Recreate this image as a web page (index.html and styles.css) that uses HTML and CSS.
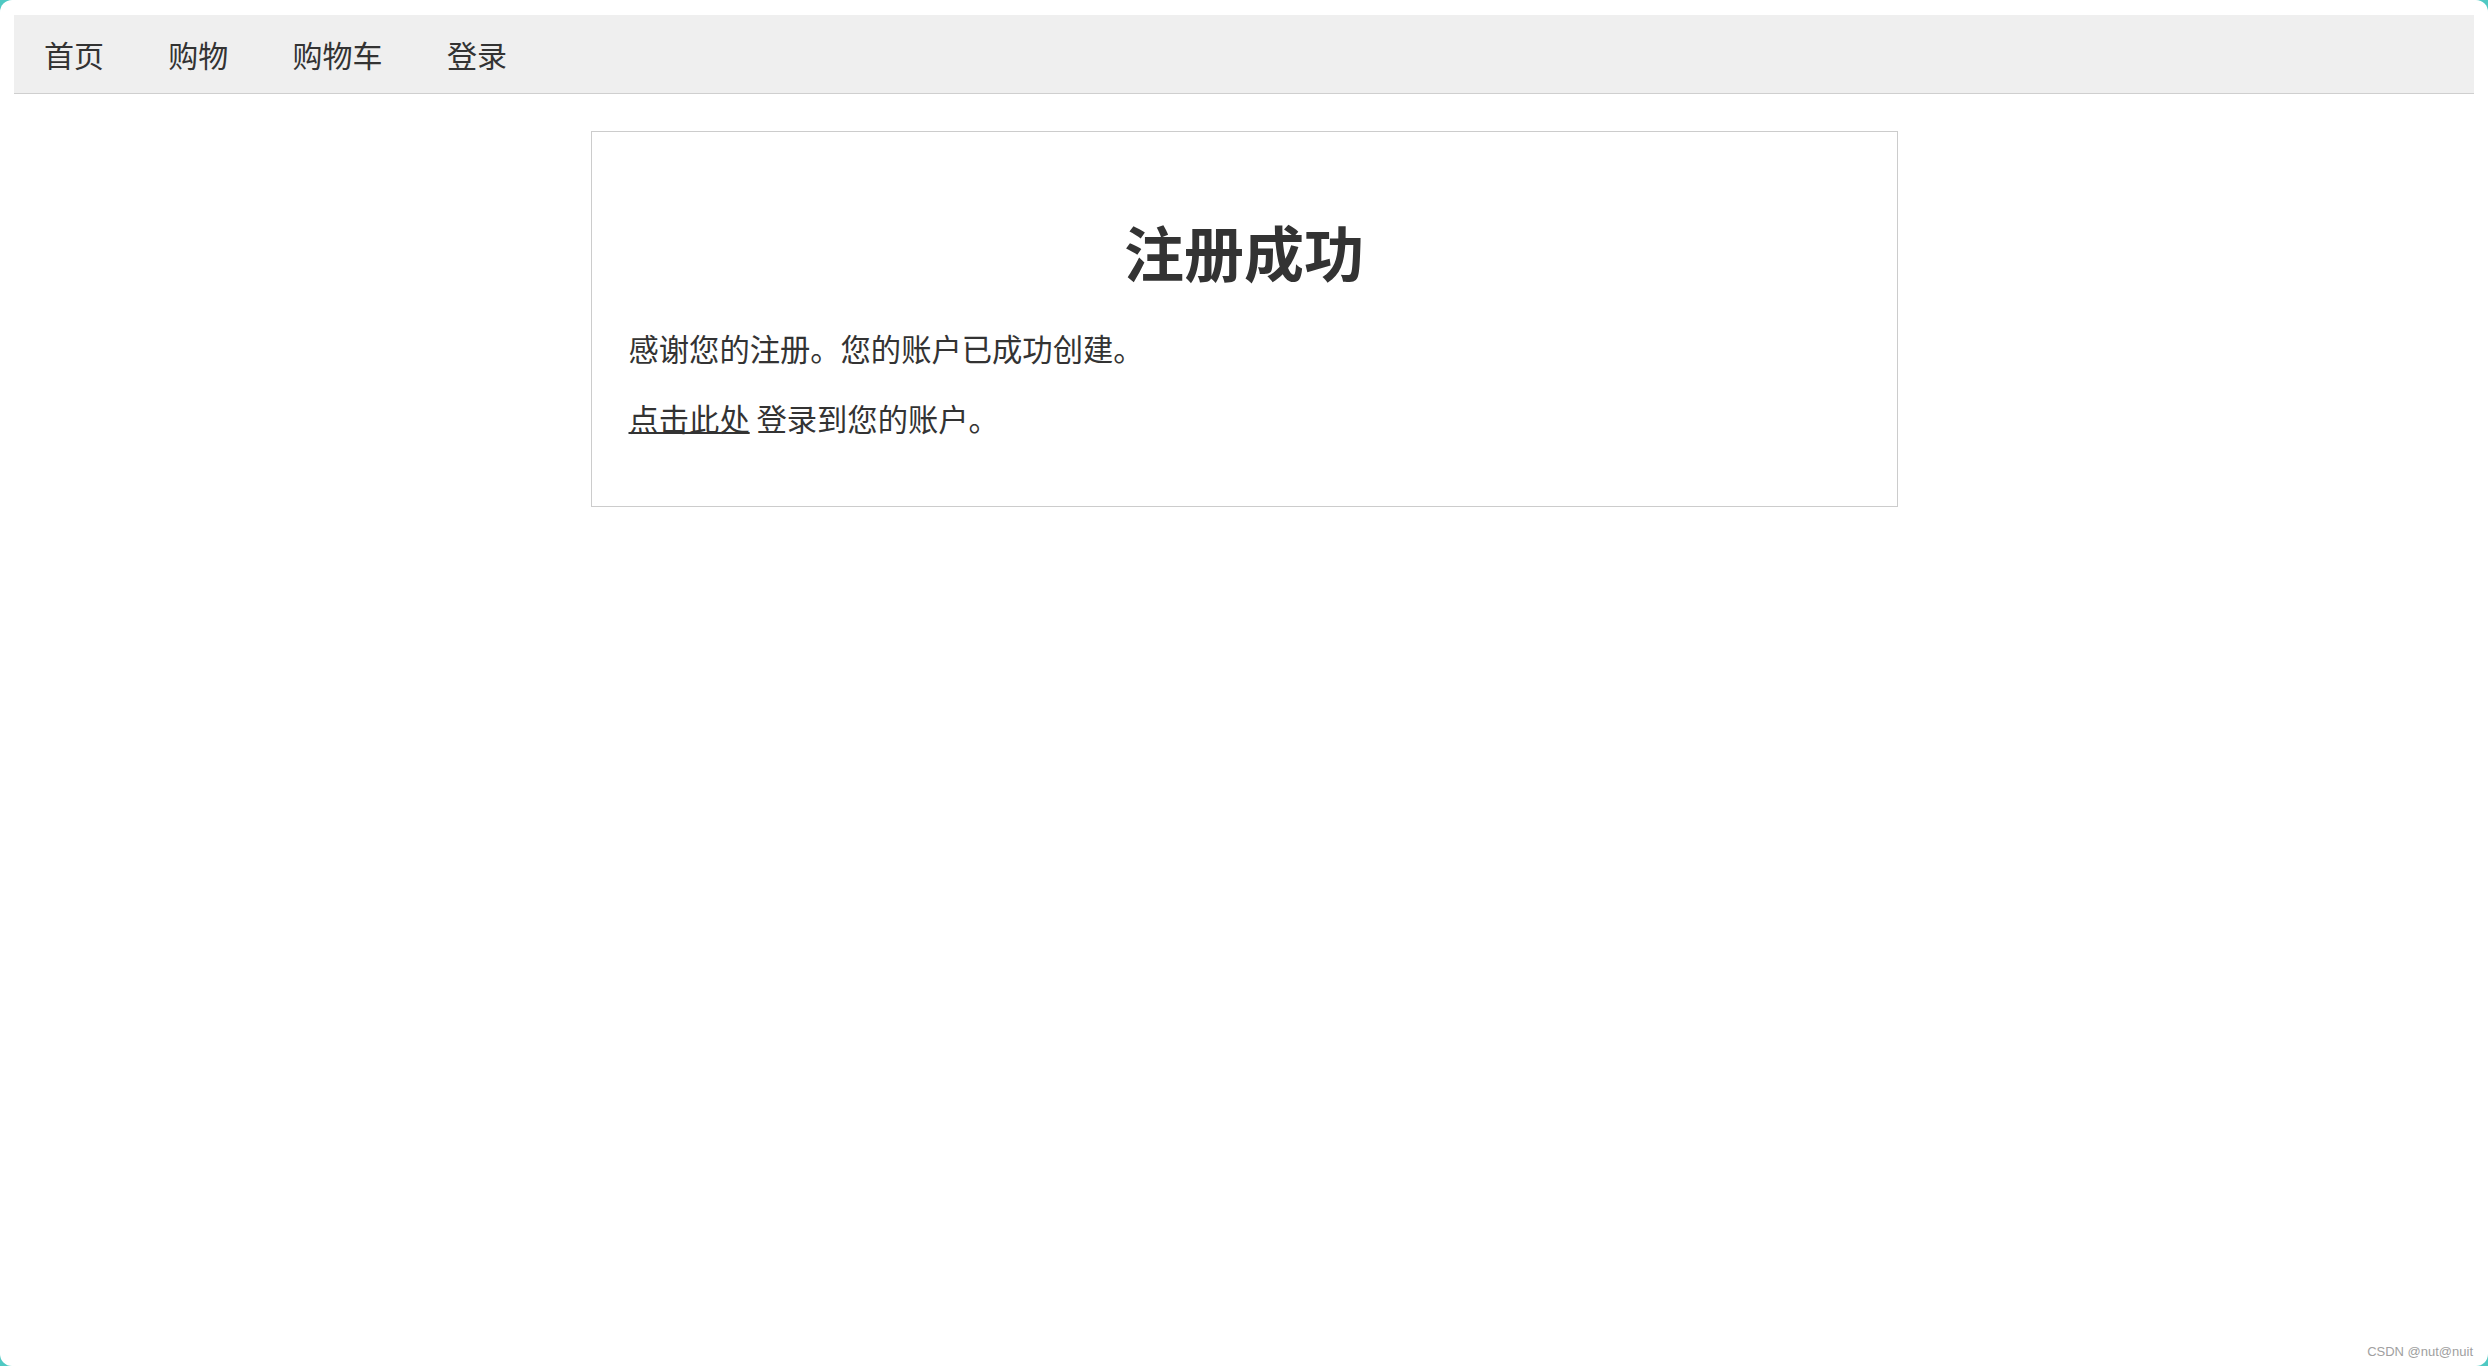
FILE: index.html
```html
<!DOCTYPE html>
<html lang="zh-CN">
<head>
<meta charset="utf-8">
<title>注册成功</title>
<link rel="stylesheet" href="styles.css">
</head>
<body>
<nav class="navbar">
  <ul class="nav-list">
    <li><a class="nav-link" href="#">首页</a></li>
    <li><a class="nav-link" href="#">购物</a></li>
    <li><a class="nav-link" href="#">购物车</a></li>
    <li><a class="nav-link" href="#">登录</a></li>
  </ul>
</nav>
<main class="card">
  <h1 class="card-title">注册成功</h1>
  <p class="card-text">感谢您的注册。您的账户已成功创建。</p>
  <p class="card-text"><a class="card-link" href="#">点击此处</a> 登录到您的账户。</p>
</main>
<div class="watermark">CSDN @nut@nuit</div>
</body>
</html>
```
FILE: styles.css
```css
html {
  background: #4fc9c3;
  height: 100%;
}
body {
  margin: 0;
  padding: 15px 14px;
  min-height: 100%;
  box-sizing: border-box;
  background: #ffffff;
  border-radius: 12px;
  font-family: "Noto Sans CJK SC", "Noto Sans", sans-serif;
  color: #333333;
  position: relative;
}
.navbar {
  background: #efefef;
  border-bottom: 1px solid #cfcfcf;
  height: 78px;
}
.nav-list {
  list-style: none;
  margin: 0;
  padding: 0;
  display: flex;
}
.nav-link {
  display: block;
  padding: 2px 34.3px 0 30px;
  line-height: 74px;
  font-size: 30px;
  color: #333333;
  text-decoration: none;
}
.card {
  width: 1307px;
  box-sizing: border-box;
  margin: 37px auto 0;
  padding: 37px 37px 40px;
  border: 1px solid #cccccc;
}
.card-title {
  margin: 49px 0 42px;
  font-size: 60px;
  line-height: 66px;
  font-weight: 700;
  text-align: center;
  color: #333333;
}
.card-text {
  margin: 0 0 26px;
  font-size: 30.3px;
  line-height: 44px;
}
.card-link {
  color: #333333;
  text-decoration: underline;
  text-decoration-thickness: 2px;
}
.watermark {
  position: absolute;
  right: 15px;
  bottom: 7px;
  font-family: "Liberation Sans", Arial, sans-serif;
  font-size: 13px;
  color: #a0a0a0;
}
```
